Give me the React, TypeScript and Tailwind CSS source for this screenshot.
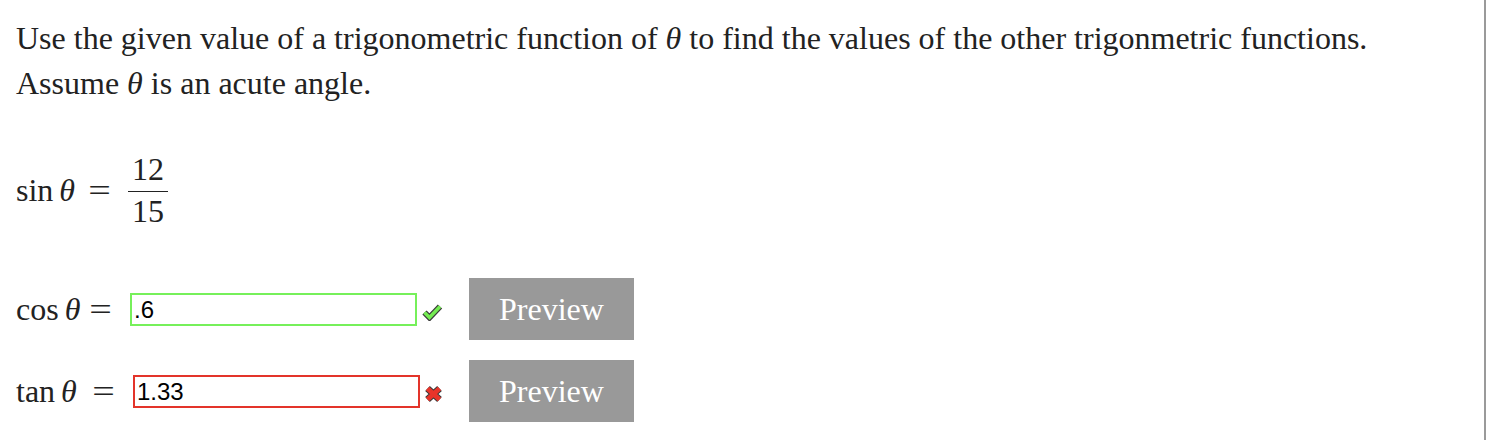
import React from "react";

const serif = "font-['Liberation_Serif','Times_New_Roman',serif]";

function Theta() {
  return <span className="italic">θ</span>;
}

function Equals() {
  return (
    <span className="ml-[10px] inline-block w-[25px] scale-x-125 text-center">=</span>
  );
}

function CheckIcon() {
  return (
    <svg width="21" height="18" viewBox="0 0 21 18" className="ml-[5px] mt-[5px] shrink-0">
      <path d="M2.5 9.5 L7.5 14.5 L18 3.5" fill="none" stroke="#3a3a3a" strokeWidth="6" />
      <path d="M2.5 9.5 L7.5 14.5 L18 3.5" fill="none" stroke="#74ec52" strokeWidth="3.5" />
    </svg>
  );
}

function CrossIcon() {
  return (
    <svg width="19" height="18" viewBox="0 0 19 18" className="ml-[4px] mt-[5px] shrink-0">
      <path d="M3.5 3.5 L15.5 14.5 M15.5 3.5 L3.5 14.5" fill="none" stroke="#3a3a3a" strokeWidth="7" />
      <path d="M3.5 3.5 L15.5 14.5 M15.5 3.5 L3.5 14.5" fill="none" stroke="#e8342a" strokeWidth="5" />
    </svg>
  );
}

type RowProps = {
  fn: string;
  labelWidth: string;
  value: string;
  correct: boolean;
};

function AnswerRow({ fn, labelWidth, value, correct }: RowProps) {
  return (
    <div className="flex h-[62px] items-center">
      <div className="flex w-[453px] items-center">
        <span className={`inline-block whitespace-nowrap leading-none ${labelWidth}`}>
          {fn}
          <span className="ml-[6px]">
            <Theta />
          </span>
        </span>
        <Equals />
        <input
          readOnly
          value={value}
          className={`ml-[17px] h-[33px] w-[287px] border-2 bg-white pl-[2px] pt-[2px] font-['Liberation_Sans',Arial,sans-serif] text-[24px] text-black outline-none ${
            correct ? "border-[#76f05a]" : "border-[#e3342a]"
          }`}
        />
        {correct ? <CheckIcon /> : <CrossIcon />}
      </div>
      <button className={`h-[62px] w-[165px] bg-[#999999] text-[32px] text-white ${serif}`}>
        Preview
      </button>
    </div>
  );
}

export default function App() {
  return (
    <div className="flex h-[440px] w-full bg-white">
      <div
        className={`flex-1 border-r-2 border-[#9a9a9a] pl-[16px] pt-[16px] text-[32px] text-[#222] ${serif}`}
      >
        <p className="leading-[45px]">
          Use the given value of a trigonometric function of <Theta /> to find the values of the
          other trigonmetric functions.
          <br />
          Assume <Theta /> is an acute angle.
        </p>

        {/* given value */}
        <div className="mt-[44px] flex h-[80px] items-center">
          <span className="inline-block w-[61px] whitespace-nowrap leading-none">
            sin
            <span className="ml-[6px]">
              <Theta />
            </span>
          </span>
          <Equals />
          <div className="ml-[16px] flex flex-col items-center">
            <span className="px-[4px] pb-[6px] leading-none">12</span>
            <span className="h-[1.5px] w-full bg-[#222]" />
            <span className="px-[4px] pt-[3px] leading-none">15</span>
          </div>
        </div>

        <div className="mt-[48px]">
          <AnswerRow fn="cos" labelWidth="w-[62px]" value=".6" correct />
        </div>
        <div className="mt-[20px]">
          <AnswerRow fn="tan" labelWidth="w-[65px]" value="1.33" correct={false} />
        </div>
      </div>
      <div className="w-[2px]" />
    </div>
  );
}
